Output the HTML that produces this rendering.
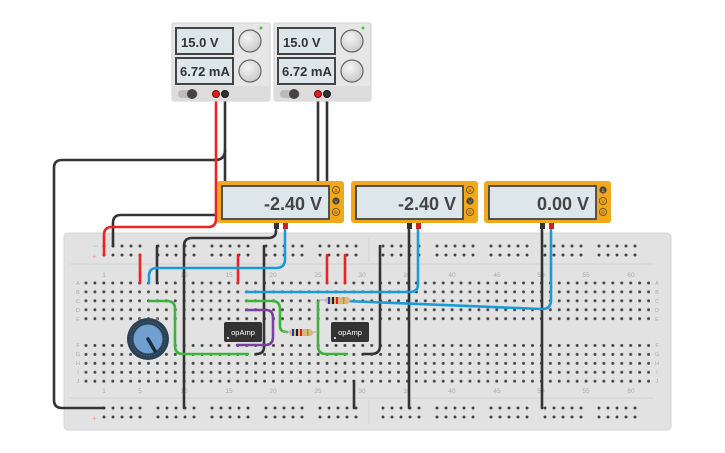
<!DOCTYPE html>
<html><head><meta charset="utf-8"><style>
html,body{margin:0;padding:0;background:#fff;width:725px;height:453px;overflow:hidden}
svg{display:block}
text{font-family:"Liberation Sans",sans-serif}
</style></head><body>
<svg width="725" height="453" viewBox="0 0 725 453" xmlns="http://www.w3.org/2000/svg">
<defs>
<pattern id="hp" x="81.5" y="278.5" width="8.93" height="8.93" patternUnits="userSpaceOnUse"><circle cx="4.47" cy="4.47" r="1.5" fill="#444"/></pattern>
<pattern id="rp" x="99.5" y="241.5" width="9" height="9" patternUnits="userSpaceOnUse"><circle cx="4.5" cy="4.5" r="1.5" fill="#444"/></pattern>
<pattern id="rp2" x="99.5" y="403.5" width="9" height="9" patternUnits="userSpaceOnUse"><circle cx="4.5" cy="4.5" r="1.5" fill="#444"/></pattern>
<radialGradient id="kn" cx="0.4" cy="0.35" r="0.7"><stop offset="0" stop-color="#f4f4f4"/><stop offset="1" stop-color="#c8c8c8"/></radialGradient>
</defs>

<rect x="64" y="233" width="607" height="197" rx="4" fill="#e2e2e2" stroke="#d4d4d4"/>
<line x1="70" y1="264" x2="654" y2="264" stroke="#d2d2d2"/>
<line x1="70" y1="398" x2="654" y2="398" stroke="#d2d2d2"/>
<line x1="369" y1="238" x2="369" y2="262" stroke="#d2d2d2"/>
<line x1="369" y1="400" x2="369" y2="424" stroke="#d2d2d2"/>
<rect x="81.5" y="278.5" width="571.5" height="44.6" fill="url(#hp)"/>
<rect x="81.5" y="340.5" width="571.5" height="44.6" fill="url(#hp)"/>
<g fill="url(#rp)">
<rect x="99.5" y="241.5" width="45" height="18"/><rect x="153.5" y="241.5" width="45" height="18"/><rect x="207.5" y="241.5" width="45" height="18"/><rect x="261.5" y="241.5" width="45" height="18"/><rect x="315.5" y="241.5" width="45" height="18"/>
<rect x="378.5" y="241.5" width="45" height="18"/><rect x="432.5" y="241.5" width="45" height="18"/><rect x="486.5" y="241.5" width="45" height="18"/><rect x="537.5" y="241.5" width="45" height="18"/><rect x="591.5" y="241.5" width="45" height="18"/>
</g>
<g fill="url(#rp2)">
<rect x="99.5" y="403.5" width="45" height="18"/><rect x="153.5" y="403.5" width="45" height="18"/><rect x="207.5" y="403.5" width="45" height="18"/><rect x="261.5" y="403.5" width="45" height="18"/><rect x="315.5" y="403.5" width="45" height="18"/>
<rect x="378.5" y="403.5" width="45" height="18"/><rect x="432.5" y="403.5" width="45" height="18"/><rect x="486.5" y="403.5" width="45" height="18"/><rect x="537.5" y="403.5" width="45" height="18"/><rect x="591.5" y="403.5" width="45" height="18"/>
</g>
<g font-size="8" fill="#f0a0a0"><text x="92" y="259">+</text><text x="92" y="421">+</text></g>
<g font-size="9" fill="#9ab8d8"><text x="93" y="249">−</text></g>
<g font-size="6.5" fill="#aaa" text-anchor="middle">
<text x="104" y="277">1</text><text x="140" y="277">5</text><text x="184" y="277">10</text><text x="229" y="277">15</text><text x="273" y="277">20</text><text x="318" y="277">25</text><text x="362" y="277">30</text><text x="407" y="277">35</text><text x="452" y="277">40</text><text x="497" y="277">45</text><text x="541" y="277">50</text><text x="586" y="277">55</text><text x="631" y="277">60</text>
<text x="104" y="393">1</text><text x="140" y="393">5</text><text x="184" y="393">10</text><text x="229" y="393">15</text><text x="273" y="393">20</text><text x="318" y="393">25</text><text x="362" y="393">30</text><text x="407" y="393">35</text><text x="452" y="393">40</text><text x="497" y="393">45</text><text x="541" y="393">50</text><text x="586" y="393">55</text><text x="631" y="393">60</text>
</g>
<g font-size="5.5" fill="#aaa" text-anchor="middle">
<text x="78" y="285">A</text><text x="78" y="294">B</text><text x="78" y="303">C</text><text x="78" y="312">D</text><text x="78" y="321">E</text><text x="78" y="347">F</text><text x="78" y="356">G</text><text x="78" y="365">H</text><text x="78" y="374">I</text><text x="78" y="383">J</text>
<text x="657" y="285">A</text><text x="657" y="294">B</text><text x="657" y="303">C</text><text x="657" y="312">D</text><text x="657" y="321">E</text><text x="657" y="347">F</text><text x="657" y="356">G</text><text x="657" y="365">H</text><text x="657" y="374">I</text><text x="657" y="383">J</text>
</g>

<g fill="none" stroke-width="2.6" stroke-linecap="round" stroke-linejoin="round">
<path d="M225 150 Q225 160 215 160 L62 160 Q54 160 54 168 L54 400 Q54 408 62 408 L104 408" stroke="#333"/>
<path d="M225 94 L225 185" stroke="#333"/>
<path d="M217 215 L121 215 Q113 215 113 223 L113 246" stroke="#333"/>
<path d="M216 94 L216 219 Q216 227 208 227 L112 227 Q104 227 104 235 L104 255" stroke="#e22"/>
<path d="M318 94 L318 185 M327 94 L327 185" stroke="#333"/>
<path d="M140 255 L140 283 M238 255 L238 283 M327 255 L327 283 M345 255 L345 283" stroke="#e22"/>
<path d="M157 246 L157 283" stroke="#333"/>
<path d="M276 230 L276 231 Q276 238 268 238 L192 238 Q184 238 184 246 L184 408" stroke="#333"/>
<path d="M264 246 L264 347 Q264 354 256 354" stroke="#333"/>
<path d="M380 246 L380 346 Q380 354 371 354 L363 354" stroke="#333"/>
<path d="M409 230 L409 408 M542 230 L542 408 M354 381 L354 408" stroke="#333"/>
<path d="M285 230 L285 259 Q285 268 276 268 L157 268 Q149 268 149 276 L149 283" stroke="#1a9ad6"/>
<path d="M246 292 L410 292 Q418 292 418 284 L418 230" stroke="#1a9ad6"/>
<path d="M345 301 L542 309 Q551 309 551 300 L551 230" stroke="#1a9ad6"/>
<path d="M149 301 L167 301 Q175 301 175 309 L175 346 Q175 354 183 354 L248 354" stroke="#3cb43c"/>
<path d="M246 301 L272 301 Q280 301 280 309 L280 326 Q280 332 287 332" stroke="#3cb43c"/>
<path d="M318 302 L318 346 Q318 354 326 354 L347 354" stroke="#3cb43c"/>
<path d="M246 310 L266 310 Q273 310 273 318 L273 337 Q273 345 265 345 L237 345" stroke="#7a3fa0"/>
</g>

<g stroke="#999" stroke-width="1.2"><line x1="140" y1="318" x2="140" y2="326"/><line x1="149" y1="318" x2="149" y2="326"/><line x1="157" y1="318" x2="157" y2="326"/></g>
<circle cx="148" cy="339" r="21" fill="#2c4254"/>
<circle cx="148" cy="339" r="17" fill="none" stroke="#4a6a84" stroke-dasharray="1 1.5"/>
<circle cx="148" cy="339" r="14.5" fill="#6fa0d0"/>
<line x1="148" y1="339" x2="155" y2="351" stroke="#1d2d3a" stroke-width="3.5" stroke-linecap="round"/>

<g>
<rect x="224" y="322" width="38" height="20" rx="2" fill="#333"/>
<text x="243" y="335" font-size="7.5" fill="#fff" text-anchor="middle">opAmp</text>
<circle cx="228" cy="338" r="1" fill="#fff"/>
<rect x="331" y="322" width="38" height="20" rx="2" fill="#333"/>
<text x="350" y="335" font-size="7.5" fill="#fff" text-anchor="middle">opAmp</text>
<circle cx="335" cy="338" r="1" fill="#fff"/>
</g>
<g>
<line x1="282" y1="332" x2="318" y2="332" stroke="#aaa" stroke-width="1"/>
<rect x="289" y="329" width="24" height="7" rx="3.5" fill="#d8b878"/>
<rect x="292" y="329" width="2" height="7" fill="#1a3ad0"/><rect x="296" y="329" width="2" height="7" fill="#222"/><rect x="300" y="329" width="2" height="7" fill="#e02020"/><rect x="307" y="329" width="1.5" height="7" fill="#b89030"/>
<line x1="318" y1="300" x2="352" y2="300" stroke="#aaa" stroke-width="1"/>
<rect x="325" y="297" width="25" height="7" rx="3.5" fill="#d8b878"/>
<rect x="328" y="297" width="2" height="7" fill="#1a3ad0"/><rect x="332" y="297" width="2" height="7" fill="#222"/><rect x="336" y="297" width="2" height="7" fill="#e02020"/><rect x="343" y="297" width="1.5" height="7" fill="#b89030"/>
</g>

<g>
<rect x="172" y="23" width="98" height="78" rx="2" fill="#e6e6e6" stroke="#d0d0d0"/>
<rect x="172" y="86" width="98" height="15" fill="#dcdcdc"/>
<rect x="176" y="28" width="57" height="26" fill="#dde6ea" stroke="#444" stroke-width="2"/>
<rect x="176" y="58" width="57" height="26" fill="#dde6ea" stroke="#444" stroke-width="2"/>
<text x="181" y="47" font-size="13" font-weight="bold" fill="#333">15.0 V</text>
<text x="180" y="76" font-size="13" font-weight="bold" fill="#333">6.72 mA</text>
<circle cx="250" cy="41" r="11" fill="url(#kn)" stroke="#666" stroke-width="1.2"/>
<circle cx="250" cy="71" r="11" fill="url(#kn)" stroke="#666" stroke-width="1.2"/>
<circle cx="261" cy="28" r="1.5" fill="#3c3"/>
<rect x="178" y="90" width="20" height="8" rx="4" fill="#bbb"/><circle cx="192" cy="94" r="5" fill="#444"/>
<circle cx="216" cy="94" r="3.5" fill="#d22" stroke="#800"/><circle cx="225" cy="94" r="3.5" fill="#333" stroke="#111"/>
</g>
<g>
<rect x="274" y="23" width="97" height="78" rx="2" fill="#e6e6e6" stroke="#d0d0d0"/>
<rect x="274" y="86" width="97" height="15" fill="#dcdcdc"/>
<rect x="278" y="28" width="57" height="26" fill="#dde6ea" stroke="#444" stroke-width="2"/>
<rect x="278" y="58" width="57" height="26" fill="#dde6ea" stroke="#444" stroke-width="2"/>
<text x="283" y="47" font-size="13" font-weight="bold" fill="#333">15.0 V</text>
<text x="282" y="76" font-size="13" font-weight="bold" fill="#333">6.72 mA</text>
<circle cx="352" cy="41" r="11" fill="url(#kn)" stroke="#666" stroke-width="1.2"/>
<circle cx="352" cy="71" r="11" fill="url(#kn)" stroke="#666" stroke-width="1.2"/>
<circle cx="363" cy="28" r="1.5" fill="#3c3"/>
<rect x="280" y="90" width="20" height="8" rx="4" fill="#bbb"/><circle cx="294" cy="94" r="5" fill="#444"/>
<circle cx="318" cy="94" r="3.5" fill="#d22" stroke="#800"/><circle cx="327" cy="94" r="3.5" fill="#333" stroke="#111"/>
</g>

<g>
<rect x="217" y="181" width="127" height="42" rx="3" fill="#f2a81d"/>
<rect x="222" y="186" width="107" height="33" fill="#dde6ea" stroke="#444" stroke-width="1.8"/>
<text x="322" y="210" font-size="18" font-weight="bold" fill="#444" text-anchor="end">-2.40 V</text>
<circle cx="336" cy="190" r="3.6" fill="none" stroke="#7a5a10"/><text x="336" y="192.3" font-size="5" text-anchor="middle" fill="#7a5a10">A</text>
<circle cx="336" cy="201" r="3.6" fill="#444"/><text x="336" y="203.3" font-size="5" text-anchor="middle" fill="#f2a81d">V</text>
<circle cx="336" cy="212" r="3.6" fill="none" stroke="#7a5a10"/><text x="336" y="214.3" font-size="5" text-anchor="middle" fill="#7a5a10">R</text>
<rect x="274" y="223" width="5" height="6" fill="#333"/><rect x="283" y="223" width="5" height="6" fill="#c22"/>
</g>
<g>
<rect x="351" y="181" width="127" height="42" rx="3" fill="#f2a81d"/>
<rect x="356" y="186" width="107" height="33" fill="#dde6ea" stroke="#444" stroke-width="1.8"/>
<text x="456" y="210" font-size="18" font-weight="bold" fill="#444" text-anchor="end">-2.40 V</text>
<circle cx="470" cy="190" r="3.6" fill="none" stroke="#7a5a10"/><text x="470" y="192.3" font-size="5" text-anchor="middle" fill="#7a5a10">A</text>
<circle cx="470" cy="201" r="3.6" fill="#444"/><text x="470" y="203.3" font-size="5" text-anchor="middle" fill="#f2a81d">V</text>
<circle cx="470" cy="212" r="3.6" fill="none" stroke="#7a5a10"/><text x="470" y="214.3" font-size="5" text-anchor="middle" fill="#7a5a10">R</text>
<rect x="407" y="223" width="5" height="6" fill="#333"/><rect x="416" y="223" width="5" height="6" fill="#c22"/>
</g>
<g>
<rect x="484" y="181" width="127" height="42" rx="3" fill="#f2a81d"/>
<rect x="489" y="186" width="107" height="33" fill="#dde6ea" stroke="#444" stroke-width="1.8"/>
<text x="589" y="210" font-size="18" font-weight="bold" fill="#444" text-anchor="end">0.00 V</text>
<circle cx="603" cy="190" r="3.6" fill="#444"/><text x="603" y="192.3" font-size="5" text-anchor="middle" fill="#f2a81d">A</text>
<circle cx="603" cy="201" r="3.6" fill="none" stroke="#7a5a10"/><text x="603" y="203.3" font-size="5" text-anchor="middle" fill="#7a5a10">V</text>
<circle cx="603" cy="212" r="3.6" fill="none" stroke="#7a5a10"/><text x="603" y="214.3" font-size="5" text-anchor="middle" fill="#7a5a10">R</text>
<rect x="540" y="223" width="5" height="6" fill="#333"/><rect x="549" y="223" width="5" height="6" fill="#c22"/>
</g>
</svg>
</body></html>
